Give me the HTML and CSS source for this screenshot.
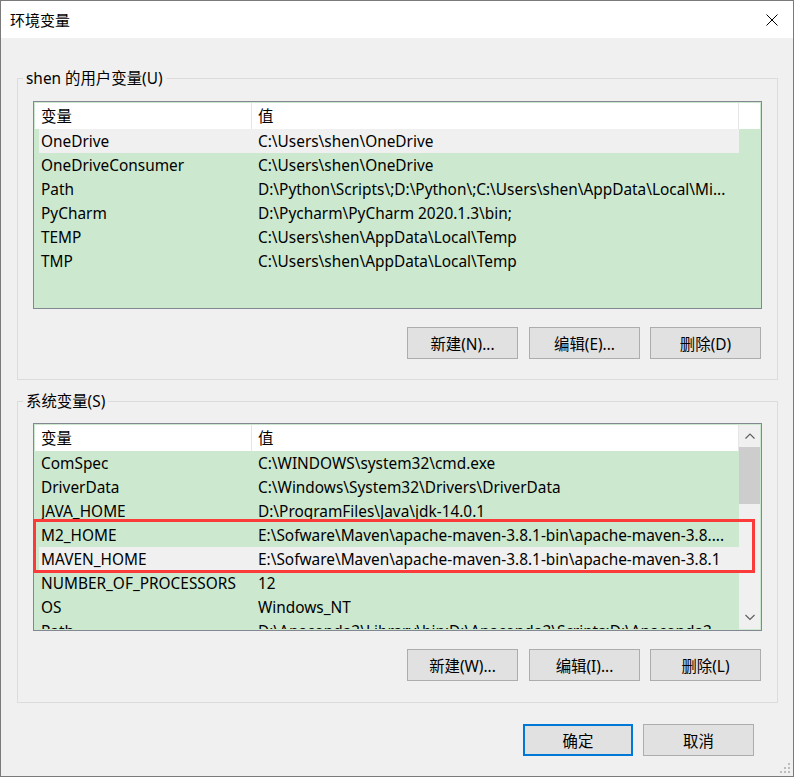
FILE: index.html
```html
<!DOCTYPE html>
<html lang="zh-CN">
<head>
  <meta charset="UTF-8">
  <title>环境变量</title>
<link rel="stylesheet" href="styles.css">
</head>
<body>
  <div class="window">
    <!-- 标题栏 -->
    <div class="titlebar">
      <span class="title">环境变量</span>
      <svg class="close" width="12" height="12" viewBox="0 0 12 12">
        <path d="M0.5 0.5 L11.5 11.5 M11.5 0.5 L0.5 11.5" stroke="#000" stroke-width="1" fill="none"/>
      </svg>
    </div>

    <!-- 用户变量 -->
    <fieldset class="group group-user">
      <legend>shen 的用户变量(U)</legend>
      <div class="list">
        <div class="list-main">
          <div class="list-head">
            <span class="col-name">变量</span>
            <span class="col-value">值</span>
          </div>
          <div class="list-body">
            <div class="row selected"><span class="name">OneDrive</span><span class="value">C:\Users\shen\OneDrive</span></div>
            <div class="row"><span class="name">OneDriveConsumer</span><span class="value">C:\Users\shen\OneDrive</span></div>
            <div class="row"><span class="name">Path</span><span class="value">D:\Python\Scripts\;D:\Python\;C:\Users\shen\AppData\Local\Mi...</span></div>
            <div class="row"><span class="name">PyCharm</span><span class="value">D:\Pycharm\PyCharm 2020.1.3\bin;</span></div>
            <div class="row"><span class="name">TEMP</span><span class="value">C:\Users\shen\AppData\Local\Temp</span></div>
            <div class="row"><span class="name">TMP</span><span class="value">C:\Users\shen\AppData\Local\Temp</span></div>
          </div>
        </div>
        <div class="list-side">
          <div class="side-head"></div>
        </div>
      </div>
      <div class="btns">
        <button class="btn">新建(N)...</button>
        <button class="btn">编辑(E)...</button>
        <button class="btn">删除(D)</button>
      </div>
    </fieldset>

    <!-- 系统变量 -->
    <fieldset class="group group-sys">
      <legend>系统变量(S)</legend>
      <div class="list">
        <div class="list-main">
          <div class="list-head">
            <span class="col-name">变量</span>
            <span class="col-value">值</span>
          </div>
          <div class="list-body">
            <div class="row"><span class="name">ComSpec</span><span class="value">C:\WINDOWS\system32\cmd.exe</span></div>
            <div class="row"><span class="name">DriverData</span><span class="value">C:\Windows\System32\Drivers\DriverData</span></div>
            <div class="row"><span class="name">JAVA_HOME</span><span class="value">D:\ProgramFiles\Java\jdk-14.0.1</span></div>
            <div class="row"><span class="name">M2_HOME</span><span class="value">E:\Sofware\Maven\apache-maven-3.8.1-bin\apache-maven-3.8....</span></div>
            <div class="row selected"><span class="name">MAVEN_HOME</span><span class="value">E:\Sofware\Maven\apache-maven-3.8.1-bin\apache-maven-3.8.1</span></div>
            <div class="row"><span class="name">NUMBER_OF_PROCESSORS</span><span class="value">12</span></div>
            <div class="row"><span class="name">OS</span><span class="value">Windows_NT</span></div>
            <div class="row"><span class="name">Path</span><span class="value">D:\Anaconda3\Library\bin;D:\Anaconda3\Scripts;D:\Anaconda3...</span></div>
          </div>
        </div>
        <div class="scrollbar">
          <svg class="arrow" width="20" height="20" viewBox="0 0 20 20">
            <path d="M5.5 12.5 L10 8 L14.5 12.5" stroke="#606060" stroke-width="1.2" fill="none"/>
          </svg>
          <div class="thumb"></div>
          <div class="track"></div>
          <svg class="arrow" width="20" height="20" viewBox="0 0 20 20">
            <path d="M5.5 8 L10 12.5 L14.5 8" stroke="#606060" stroke-width="1.2" fill="none"/>
          </svg>
        </div>
        <!-- 标注框 -->
        <div class="mark"></div>
      </div>
      <div class="btns">
        <button class="btn">新建(W)...</button>
        <button class="btn">编辑(I)...</button>
        <button class="btn">删除(L)</button>
      </div>
    </fieldset>

    <div class="dialog-btns">
      <button class="btn btn-ok">确定</button>
      <button class="btn">取消</button>
    </div>

    <svg class="grip" width="12" height="12" viewBox="0 0 12 12">
      <rect x="8" y="0" width="2" height="2" fill="#bcbcbc"/>
      <rect x="4" y="4" width="2" height="2" fill="#bcbcbc"/>
      <rect x="8" y="4" width="2" height="2" fill="#bcbcbc"/>
      <rect x="0" y="8" width="2" height="2" fill="#bcbcbc"/>
      <rect x="4" y="8" width="2" height="2" fill="#bcbcbc"/>
      <rect x="8" y="8" width="2" height="2" fill="#bcbcbc"/>
    </svg>
  </div>
</body>
</html>
```

FILE: styles.css
```css
*{margin: 0;padding: 0;box-sizing: border-box;}
body{
  background: #f0f0f0;
  font-family: "Noto Sans", "Noto Sans CJK SC", sans-serif;
  font-size: 15.4px;
  color: #000;
}
.window{
  width: 794px;
  height: 777px;
  border: 1px solid #7a7a7a;
  background: #f0f0f0;
  position: relative;
}
.titlebar{
  height: 37px;
  background: #fff;
  display: flex;
  align-items: center;
  justify-content: space-between;
  padding: 0 15px 0 9px;
}
.titlebar .title{
  font-family: "Noto Sans CJK SC", sans-serif;
  font-size: 15px;
}
.close{display: block;}

/* 分组框 */
.group{
  border: 1px solid #dcdcdc;
  margin: 30px 15px 0 16px;
  padding: 13px 15px 20px;
  min-width: 0;
}
.group legend{
  margin-left: -10px;
  padding: 1px 3px 0;
  line-height: 19px;
  height: 20px;
}
.group-sys{
  margin-top: 11px;
  padding-top: 12px;
  padding-bottom: 21px;
}

/* 列表 */
.list{
  height: 208px;
  border: 1px solid #828790;
  padding: 1px;
  background: #cce8cf;
  display: flex;
  position: relative;
}
.list-main{
  width: 704px;
  display: flex;
  flex-direction: column;
  overflow: hidden;
}
.list-head{
  height: 26px;
  background: #fff;
  display: flex;
  line-height: 25px;
  flex-shrink: 0;
}
.list-head span{
  border-right: 1px solid #e5e5e5;
  padding: 1px 0 0 6px;
}
.list-head .col-name{width: 217px;}
.list-head .col-value{width: 487px;}
.list-body{
  flex: 1;
  overflow: hidden;
}
.row{
  margin-left: 4px;
  height: 24px;
  line-height: 23px;
  display: flex;
  white-space: nowrap;
}
.row span{padding-top: 1px;}
.row .name{
  width: 219px;
  padding-left: 2px;
  flex-shrink: 0;
}
.row .value{
  overflow: hidden;
}
.row.selected{
  background: #f0f0f0;
}
.list-side{
  flex: 1;
}
.side-head{
  height: 26px;
  background: #fff;
}

/* 滚动条 */
.scrollbar{
  flex: 1;
  background: #f0f0f0;
  display: flex;
  flex-direction: column;
  align-items: center;
}
.scrollbar .arrow{display: block;flex-shrink: 0;margin-top: 1px;}
.scrollbar .thumb{
  width: 100%;
  height: 57px;
  background: #cdcdcd;
  margin-top: 1px;
}
.scrollbar .track{flex: 1;}
.scrollbar .arrow:last-child{margin-top: 0;margin-bottom: 2px;}

.mark{
  position: absolute;
  left: -1px;
  top: 95px;
  width: 722px;
  height: 54px;
  border: 3px solid #fb3a3a;
}

/* 按钮 */
.btns{
  display: flex;
  justify-content: flex-end;
  gap: 10px;
  margin-top: 18px;
  margin-right: 1px;
}
.btns .btn:first-child{margin-right: 1px;}
.btn{
  width: 111px;
  height: 32px;
  background: #e1e1e1;
  border: 1px solid #adadad;
  font-family: "Noto Sans", "Noto Sans CJK SC", sans-serif;
  font-size: 15.4px;
  color: #000;
}
.dialog-btns{
  display: flex;
  justify-content: flex-end;
  gap: 10px;
  margin-top: 21px;
  padding-right: 39px;
}
.btn-ok{
  width: 110px;
  border: 2px solid #0078d7;
}
.grip{
  position: absolute;
  right: 1px;
  bottom: 1px;
}
```
